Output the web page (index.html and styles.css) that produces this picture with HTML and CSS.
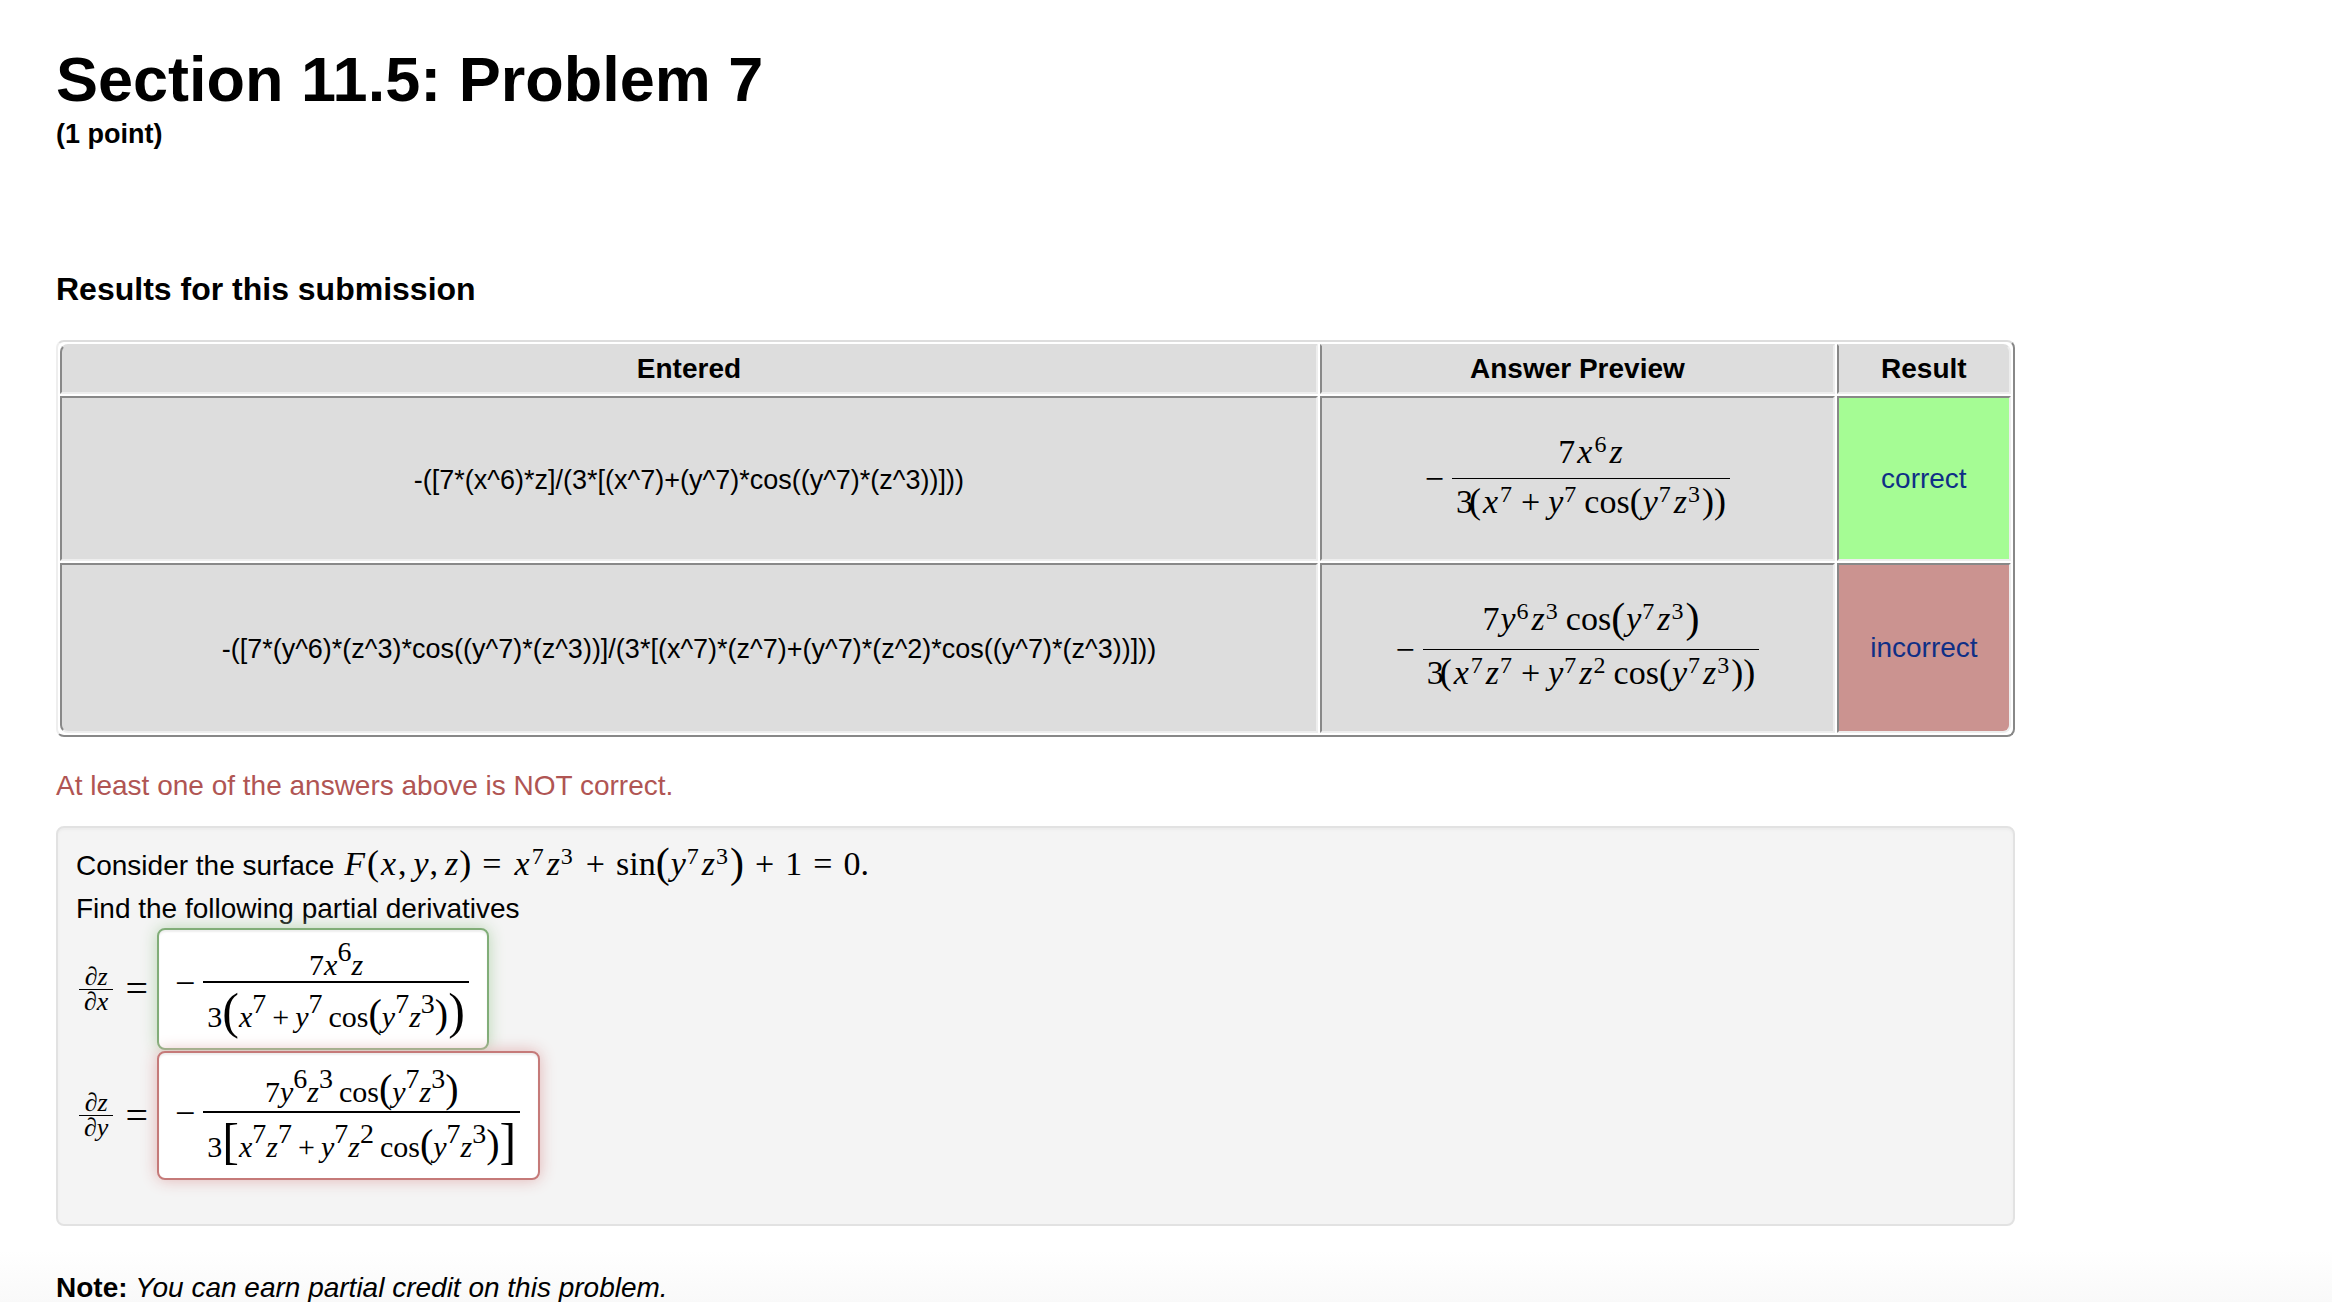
FILE: index.html
```html
<!DOCTYPE html>
<html lang="en">
<head>
<meta charset="utf-8">
<title>Section 11.5: Problem 7</title>
<link rel="stylesheet" href="styles.css">
</head>
<body>
<main class="page">
  <h1 class="title">Section 11.5: Problem 7</h1>
  <p class="points">(1 point)</p>

  <h2 class="results-title">Results for this submission</h2>
  <table class="results">
    <thead>
      <tr><th class="col-entered" scope="col">Entered</th><th class="col-preview" scope="col">Answer Preview</th><th class="col-result" scope="col">Result</th></tr>
    </thead>
    <tbody>
      <tr class="row-first">
        <td class="entered">-([7*(x^6)*z]/(3*[(x^7)+(y^7)*cos((y^7)*(z^3))]))</td>
        <td><span class="math"><span class="minus">−</span><span class="frac"><span class="num">7<i class="x">x</i><sup>6</sup><i class="z">z</i></span><span class="den">3<span class="p tight">(</span><i class="x">x</i><sup>7</sup><span class="op">+</span><i class="y">y</i><sup>7</sup><span class="fn">cos</span><span class="p">(</span><i class="y">y</i><sup>7</sup><i class="z">z</i><sup>3</sup><span class="p">)</span><span class="p">)</span></span></span></span></td>
        <td class="correct"><a href="#answer-1">correct</a></td>
      </tr>
      <tr class="row-second">
        <td class="entered">-([7*(y^6)*(z^3)*cos((y^7)*(z^3))]/(3*[(x^7)*(z^7)+(y^7)*(z^2)*cos((y^7)*(z^3))]))</td>
        <td><span class="math"><span class="minus">−</span><span class="frac"><span class="num num-deep">7<i class="y">y</i><sup>6</sup><i class="z">z</i><sup>3</sup><span class="fn">cos</span><span class="p p-big">(</span><i class="y">y</i><sup>7</sup><i class="z">z</i><sup>3</sup><span class="p p-big">)</span></span><span class="den">3<span class="p tight">(</span><i class="x">x</i><sup>7</sup><i class="z">z</i><sup>7</sup><span class="op">+</span><i class="y">y</i><sup>7</sup><i class="z">z</i><sup>2</sup><span class="fn">cos</span><span class="p">(</span><i class="y">y</i><sup>7</sup><i class="z">z</i><sup>3</sup><span class="p">)</span><span class="p">)</span></span></span></span></td>
        <td class="incorrect"><a href="#answer-2">incorrect</a></td>
      </tr>
    </tbody>
  </table>

  <p class="alert">At least one of the answers above is NOT correct.</p>

  <section class="problem">
    <p class="line">Consider the surface <span class="math-line"><i class="x">F</i><span class="p">(</span><i class="x">x</i>,<i class="y after-comma">y</i>,<i class="z after-comma">z</i><span class="p">)</span><span class="op">=</span><i class="x">x</i><sup>7</sup><i class="z">z</i><sup>3</sup><span class="op">+</span>sin<span class="p p-big">(</span><i class="y">y</i><sup>7</sup><i class="z">z</i><sup>3</sup><span class="p p-big">)</span><span class="op">+</span>1<span class="op">=</span>0.</span></p>
    <p class="line">Find the following partial derivatives</p>
    <div class="answer-row">
      <span class="partial" id="label-1"><span class="partial-num">∂<i>z</i></span><span class="partial-den">∂<i>x</i></span></span>
      <span class="equals">=</span>
      <span class="answer answer-correct" id="answer-1" role="textbox" contenteditable="true" spellcheck="false" aria-labelledby="label-1"><span class="minus">−</span><span class="frac"><span class="num">7<i>x</i><sup>6</sup><i>z</i></span><span class="den">3<span class="p p-outer">(</span><i>x</i><sup>7</sup><span class="op">+</span><i>y</i><sup>7</sup><span class="fn">cos</span><span class="p">(</span><i>y</i><sup>7</sup><i>z</i><sup>3</sup><span class="p">)</span><span class="p p-outer">)</span></span></span></span>
    </div>
    <div class="answer-row">
      <span class="partial" id="label-2"><span class="partial-num">∂<i>z</i></span><span class="partial-den">∂<i>y</i></span></span>
      <span class="equals">=</span>
      <span class="answer answer-incorrect" id="answer-2" role="textbox" contenteditable="true" spellcheck="false" aria-labelledby="label-2"><span class="minus">−</span><span class="frac"><span class="num num-deep">7<i>y</i><sup>6</sup><i>z</i><sup>3</sup><span class="fn">cos</span><span class="p">(</span><i>y</i><sup>7</sup><i>z</i><sup>3</sup><span class="p">)</span></span><span class="den">3<span class="p p-outer">[</span><i>x</i><sup>7</sup><i>z</i><sup>7</sup><span class="op">+</span><i>y</i><sup>7</sup><i>z</i><sup>2</sup><span class="fn">cos</span><span class="p">(</span><i>y</i><sup>7</sup><i>z</i><sup>3</sup><span class="p">)</span><span class="p p-outer">]</span></span></span></span>
    </div>
  </section>

  <p class="note"><strong>Note:</strong> <em>You can earn partial credit on this problem.</em></p>
</main>
</body>
</html>
```
FILE: styles.css
```css
* { box-sizing: border-box; }

html {
  background: #fff linear-gradient(#fff calc(100% - 52px), #f9f9f9) fixed;
  overflow-x: hidden;
  scrollbar-width: none;
}

body {
  margin: 0;
  color: #000;
  font: 28px/40px "Liberation Sans", Arial, sans-serif;
}

.page {
  width: 84%;
  margin-left: 56px;
  padding-top: 46px;
}

h1, h2, p { margin: 0; }

.title { font-size: 63px; line-height: 66px; }
.points { margin-top: 2px; font-size: 27px; font-weight: bold; }
.results-title { margin-top: 115px; font-size: 32px; line-height: 40px; }

/* Results table */
.results {
  width: 100%;
  margin-top: 31px;
  table-layout: fixed;
  border: 2px solid;
  border-color: #ddd #888 #888 #eee;
  border-radius: 8px;
  border-collapse: separate;
  border-spacing: 2px;
  text-align: center;
}
.results th, .results td {
  padding: 0;
  background: #ddd;
  border: 2px solid;
  border-color: #888 #eee #eee #888;
  vertical-align: middle;
}
.results th { height: 50px; border-top-color: #ddd; }
.results th:first-child { border-top-left-radius: 8px; }
.results th:last-child { border-top-right-radius: 8px; }
.results tr:last-child td:last-child { border-bottom-right-radius: 8px; }
.results tr:last-child td:first-child { border-bottom-left-radius: 8px; }
.col-preview { width: 515px; }
.col-result { width: 174px; }
.row-first td { height: 165px; }
.row-second td { height: 170px; }
.results .entered { padding-top: 2px; font-size: 27px; }
.results .correct { background: #a5fc94; }
.results .incorrect { background: #cb9390; }
.results a { color: #0f2f86; text-decoration: none; }

/* Shared formula pieces */
.math, .math-line, .answer, .partial, .equals {
  font-family: "Liberation Serif", "Times New Roman", serif;
  white-space: nowrap;
}
sup, .p { line-height: 0; }
.frac {
  display: inline-grid;
  grid-template-rows: 1fr 1fr;
  text-align: center;
}
.num { align-self: end; }

/* Typeset formulas */
.math { display: inline-flex; align-items: center; gap: 8px; font-size: 34px; line-height: 34px; }
.math-line { font-size: 34px; line-height: 34px; }
.math sup, .math-line sup { margin-right: 2px; font-size: 24px; vertical-align: 11px; }
.math .num { padding-bottom: 9px; border-bottom: 1px solid #000; }
.math .num-deep { padding-bottom: 13px; }
.math .den { padding: 6px 4px 4px; }
.row-second .math { padding-top: 4px; }
.x { padding: 0 2px; }
.y, .z { padding: 0 1px; }
.after-comma { margin-left: 6px; }
.op { margin: 0 7px; }
.math-line .op { margin: 0 11px; }
.fn { margin-left: 6px; }
.math .p, .math-line .p { font-size: 36px; }
.math .p-big, .math-line .p-big { font-size: 42px; vertical-align: -2px; }
.math .tight { margin-left: -4px; }

.alert { margin-top: 29px; color: #b05553; }

/* Problem statement */
.problem {
  margin-top: 20px;
  padding: 16px 18px 44px;
  border: 2px solid #e2e2e2;
  border-radius: 8px;
  background: #f4f4f4;
  box-shadow: inset 0 2px 2px #ececec;
}
.line { line-height: 43px; }
.line + .answer-row { margin-top: -2px; }

.answer-row { display: flex; align-items: center; }
.answer-row + .answer-row { margin-top: 1px; }
.partial {
  display: grid;
  margin: 0 12px 0 3px;
  font-size: 26px;
  line-height: 24px;
  text-align: center;
}
.partial-num { padding: 0 5px; border-bottom: 1px solid #000; }
.partial-den { padding: 0 5px; }
.equals { margin-right: 9px; font-size: 40px; }

.answer {
  display: inline-flex;
  align-items: center;
  gap: 8px;
  padding: 0 18px 12px 16px;
  border: 2px solid;
  border-radius: 8px;
  background: #fff;
  font-size: 30px;
  line-height: 30px;
}
.answer-correct { border-color: #81ad78; box-shadow: 0 0 16px #b9d6b3, inset 0 2px 2px #eee; }
.answer-incorrect {
  padding-top: 4px;
  padding-bottom: 9px;
  border-color: #c57a79;
  box-shadow: 0 0 16px #e2b4b4, inset 0 2px 2px #eee;
}
.answer .minus { font-size: 36px; }
.answer sup { font-size: 28px; vertical-align: 14px; }
.answer .num { padding-bottom: 1px; border-bottom: 2px solid #000; }
.answer .num-deep { padding-bottom: 4px; }
.answer .den { padding: 15px 4px 0; line-height: 38px; }
.answer-incorrect .den { padding-bottom: 3px; }
.answer .op { margin: 0 6px; }
.answer .p { font-size: 40px; }
.answer .p-outer { font-size: 50px; vertical-align: -1px; }

.note { margin-top: 42px; }
```
